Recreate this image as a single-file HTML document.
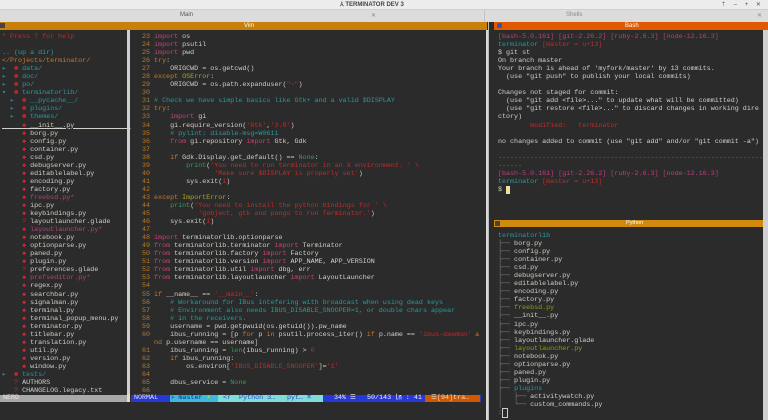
<!DOCTYPE html>
<html><head><meta charset="utf-8"><style>
*{margin:0;padding:0;box-sizing:border-box}
body{width:768px;height:420px;overflow:hidden;background:#2b2b2b;position:relative;font-family:"Liberation Mono",monospace;font-size:6.7px;color:#d2d0c8}
.a{position:absolute}
pre{position:absolute;font-family:"Liberation Mono",monospace;font-size:6.7px;line-height:8.05px;white-space:pre;color:#d2d0c8}
.k{color:#c8407a}.o{color:#c8782a}.c{color:#2a9a9a}.s{color:#c82828}.g{color:#3a9a5a}.n{color:#c07a20}.y{color:#a8a820}
.t{color:#2a9aa0}.r{color:#c82828}.p{color:#b8407a}.gr{color:#888}.yl{color:#8aa010}
.ui{font-family:"Liberation Sans",sans-serif}
.st{position:absolute;top:394px;font-family:"Liberation Mono",monospace;font-size:6.7px;line-height:8px;white-space:pre}
</style></head><body>
<div class="a ui" style="left:0;top:0;width:768px;height:10px;background:#ececec;border-bottom:1px solid #cfcfcf"></div>
<div class="a ui" style="left:340px;top:1px;font-size:6px;font-weight:bold;color:#444">⅄ TERMINATOR DEV 3</div>
<div class="a ui" style="left:721px;top:1px;font-size:6px;color:#555;letter-spacing:3px">⇡ – + ✕</div>
<div class="a" style="left:0;top:10px;width:768px;height:12px;background:#dcdcdc"></div>
<div class="a" style="left:484px;top:10px;width:1px;height:12px;background:#c4c4c4"></div>
<div class="a ui" style="left:180px;top:12px;font-size:6px;color:#555">Main</div>
<div class="a ui" style="left:371px;top:12px;font-size:6px;color:#888">✕</div>
<div class="a ui" style="left:566px;top:12px;font-size:6px;color:#888">Shells</div>
<div class="a ui" style="left:757px;top:12px;font-size:6px;color:#888">✕</div>
<div class="a" style="left:0;top:22px;width:487px;height:8px;background:#c8800a"></div>
<div class="a" style="left:0;top:23px;width:5px;height:5px;background:#444"></div>
<div class="a ui" style="left:244px;top:22px;font-size:6px;color:#fff;line-height:8px">Vim</div>
<div class="a" style="left:494px;top:22px;width:274px;height:8px;background:#e05800"></div>
<div class="a" style="left:497px;top:23px;width:5px;height:5px;background:#3050a0;border:1px solid #c03030"></div>
<div class="a ui" style="left:625px;top:22px;font-size:6px;color:#fff;line-height:8px">Bash</div>
<div class="a" style="left:486px;top:30px;width:2px;height:390px;background:#d8d8d8"></div>
<div class="a" style="left:488px;top:22px;width:6px;height:398px;background:#2b2b2b;border-left:1px solid #bbb"></div>
<div class="a" style="left:763px;top:30px;width:5px;height:390px;background:#d0d0d0"></div>
<div class="a" style="left:127px;top:30px;width:3px;height:364px;background:#cfcfcf"></div>
<div class="a" style="left:494px;top:220px;width:269px;height:7px;background:#d08a10"></div>
<div class="a" style="left:495px;top:221px;width:5px;height:5px;background:#444"></div>
<div class="a ui" style="left:626px;top:220px;font-size:5.5px;color:#fff;line-height:7px">Python</div>

<pre style="left:2px;top:33px"><span class="r">" Press ? for help</span>

<span class="t">.. (up a dir)</span>
<span class="o">&lt;/Projects/terminator/</span>
<span class="t">▸  <span class="r">■</span> data/</span>
<span class="t">▸  <span class="r">■</span> doc/</span>
<span class="t">▸  <span class="r">■</span> po/</span>
<span class="t">▾  <span class="r">■</span> terminatorlib/</span>
<span class="t">  ▸  <span class="r">■</span> __pycache__/</span>
<span class="t">  ▸  <span class="r">■</span> plugins/</span>
<span class="t">  ▸  <span class="r">■</span> themes/</span>
<span style="text-decoration:underline">     <span class="r">◆</span> __init__.py              </span>
<span class="r">     ◆</span> borg.py
<span class="r">     ◆</span> config.py
<span class="r">     ◆</span> container.py
<span class="r">     ◆</span> csd.py
<span class="r">     ◆</span> debugserver.py
<span class="r">     ◆</span> editablelabel.py
<span class="r">     ◆</span> encoding.py
<span class="r">     ◆</span> factory.py
<span class="r">     ◆</span> <span class="p">freebsd.py*</span>
<span class="r">     ◆</span> ipc.py
<span class="r">     ◆</span> keybindings.py
<span class="r">     ?</span> layoutlauncher.glade
<span class="r">     ◆</span> <span class="p">layoutlauncher.py*</span>
<span class="r">     ◆</span> notebook.py
<span class="r">     ◆</span> optionparse.py
<span class="r">     ◆</span> paned.py
<span class="r">     ◆</span> plugin.py
<span class="r">     ?</span> preferences.glade
<span class="r">     ◆</span> <span class="p">prefseditor.py*</span>
<span class="r">     ◆</span> regex.py
<span class="r">     ◆</span> searchbar.py
<span class="r">     ◆</span> signalman.py
<span class="r">     ◆</span> terminal.py
<span class="r">     ◆</span> terminal_popup_menu.py
<span class="r">     ◆</span> terminator.py
<span class="r">     ◆</span> titlebar.py
<span class="r">     ◆</span> translation.py
<span class="r">     ◆</span> util.py
<span class="r">     ◆</span> version.py
<span class="r">     ◆</span> window.py
<span class="t">▸  <span class="r">■</span> tests/</span>
<span class="r">   ?</span> AUTHORS
<span class="r">   ?</span> CHANGELOG.legacy.txt</pre>

<pre style="left:142px;top:33px"><span class="n">23</span> <span class="k">import</span> os
<span class="n">24</span> <span class="k">import</span> psutil
<span class="n">25</span> <span class="k">import</span> pwd
<span class="n">26</span> <span class="o">try</span>:
<span class="n">27</span>     ORIGCWD = os.getcwd()
<span class="n">28</span> <span class="o">except</span> <span class="y">OSError</span>:
<span class="n">29</span>     ORIGCWD = os.path.expanduser(<span class="s">"~"</span>)
<span class="n">30</span>
<span class="n">31</span> <span class="c"># Check we have simple basics like Gtk+ and a valid $DISPLAY</span>
<span class="n">32</span> <span class="o">try</span>:
<span class="n">33</span>     <span class="k">import</span> gi
<span class="n">34</span>     gi.require_version(<span class="s">'Gtk'</span>,<span class="s">'3.0'</span>)
<span class="n">35</span>     <span class="c"># pylint: disable-msg=W0611</span>
<span class="n">36</span>     <span class="k">from</span> gi.repository <span class="k">import</span> Gtk, Gdk
<span class="n">37</span>
<span class="n">38</span>     <span class="o">if</span> Gdk.Display.get_default() == <span class="g">None</span>:
<span class="n">39</span>         <span class="g">print</span>(<span class="s">'You need to run terminator in an X environment. '</span> <span class="s">\</span>
<span class="n">40</span>                <span class="s">'Make sure $DISPLAY is properly set'</span>)
<span class="n">41</span>         sys.exit(<span class="s">1</span>)
<span class="n">42</span>
<span class="n">43</span> <span class="o">except</span> <span class="y">ImportError</span>:
<span class="n">44</span>     <span class="g">print</span>(<span class="s">'You need to install the python bindings for '</span> <span class="s">\</span>
<span class="n">45</span>            <span class="s">'gobject, gtk and pango to run Terminator.'</span>)
<span class="n">46</span>     sys.exit(<span class="s">1</span>)
<span class="n">47</span>
<span class="n">48</span> <span class="k">import</span> terminatorlib.optionparse
<span class="n">49</span> <span class="k">from</span> terminatorlib.terminator <span class="k">import</span> Terminator
<span class="n">50</span> <span class="k">from</span> terminatorlib.factory <span class="k">import</span> Factory
<span class="n">51</span> <span class="k">from</span> terminatorlib.version <span class="k">import</span> APP_NAME, APP_VERSION
<span class="n">52</span> <span class="k">from</span> terminatorlib.util <span class="k">import</span> dbg, err
<span class="n">53</span> <span class="k">from</span> terminatorlib.layoutlauncher <span class="k">import</span> LayoutLauncher
<span class="n">54</span>
<span class="n">55</span> <span class="o">if</span> __name__ == <span class="s">'__main__'</span>:
<span class="n">56</span>     <span class="c"># Workaround for IBus intefering with broadcast when using dead keys</span>
<span class="n">57</span>     <span class="c"># Environment also needs IBUS_DISABLE_SNOOPER=1, or double chars appear</span>
<span class="n">58</span>     <span class="c"># in the receivers.</span>
<span class="n">59</span>     username = pwd.getpwuid(os.getuid()).pw_name
<span class="n">60</span>     ibus_running = [p <span class="o">for</span> p <span class="o">in</span> psutil.process_iter() <span class="o">if</span> p.name == <span class="s">'ibus-daemon'</span> <span class="o">a</span>
   <span class="o">nd</span> p.username == username]
<span class="n">61</span>     ibus_running = <span class="g">len</span>(ibus_running) &gt; <span class="s">0</span>
<span class="n">62</span>     <span class="o">if</span> ibus_running:
<span class="n">63</span>         os.environ[<span class="s">'IBUS_DISABLE_SNOOPER'</span>]=<span class="s">'1'</span>
<span class="n">64</span>
<span class="n">65</span>     dbus_service = <span class="g">None</span>
<span class="n">66</span></pre>

<div class="a" style="left:0;top:395px;width:127px;height:7px;background:#a8a8a8"></div>
<div class="st" style="left:3px;color:#e8e8e8">NERD</div>
<div class="a" style="left:127px;top:394px;width:3px;height:8px;background:#e8dcc0"></div>
<div class="a" style="left:131px;top:395px;width:350px;height:7px;background:#2838d8"></div>
<div class="a" style="left:170px;top:395px;width:48px;height:7px;background:#40b8d8"></div>
<div class="a" style="left:218px;top:395px;width:105px;height:7px;background:#80dcd8"></div>
<div class="a" style="left:425px;top:395px;width:55px;height:7px;background:#d05800"></div>
<div class="st" style="left:134px;color:#dde">NORMAL</div>
<div class="st" style="left:171px;color:#1828a0">᚛ master <span style="color:#f0e020">⚡</span></div>
<div class="st" style="left:223px;color:#2848c8">&lt;r  Python 3…</div>
<div class="st" style="left:287px;color:#2848c8">pyt… ⌘</div>
<div class="st" style="left:334px;color:#eef">34% ☰</div>
<div class="st" style="left:367px;color:#eef">50/143 ㏑ : 41</div>
<div class="st" style="left:431px;color:#f0d8c0">☰[94]tra…</div>

<pre style="left:498px;top:33px"><span class="p">[bash-5.0.161] [git-2.26.2] [ruby-2.6.3] [node-12.16.3]</span>
<span class="t">terminator</span> <span class="r">[master = u+13]</span>
$ git st
On branch master
Your branch is ahead of 'myfork/master' by 13 commits.
  (use "git push" to publish your local commits)

Changes not staged for commit:
  (use "git add &lt;file&gt;..." to update what will be committed)
  (use "git restore &lt;file&gt;..." to discard changes in working dire
ctory)
        <span class="r">modified:   terminator</span>

no changes added to commit (use "git add" and/or "git commit -a")

<span class="p">------------------------------------------------------------------
------</span>
<span class="p">[bash-5.0.161] [git-2.26.2] [ruby-2.6.3] [node-12.16.3]</span>
<span class="t">terminator</span> <span class="r">[master = u+13]</span>
$ <span style="background:#f0e0a0"> </span></pre>

<pre style="left:498px;top:232px"><span class="t">terminatorlib</span>
<span class="gr">├──</span> borg.py
<span class="gr">├──</span> config.py
<span class="gr">├──</span> container.py
<span class="gr">├──</span> csd.py
<span class="gr">├──</span> debugserver.py
<span class="gr">├──</span> editablelabel.py
<span class="gr">├──</span> encoding.py
<span class="gr">├──</span> factory.py
<span class="gr">├──</span> <span class="yl">freebsd.py</span>
<span class="gr">├──</span> __init__.py
<span class="gr">├──</span> ipc.py
<span class="gr">├──</span> keybindings.py
<span class="gr">├──</span> layoutlauncher.glade
<span class="gr">├──</span> <span class="yl">layoutlauncher.py</span>
<span class="gr">├──</span> notebook.py
<span class="gr">├──</span> optionparse.py
<span class="gr">├──</span> paned.py
<span class="gr">├──</span> plugin.py
<span class="gr">├──</span> <span class="t">plugins</span>
<span class="gr">│   ├──</span> activitywatch.py
<span class="gr">│   └──</span> custom_commands.py
<span class="gr">:</span><span style="border:1px solid #ccc"> </span></pre>
</body></html>
